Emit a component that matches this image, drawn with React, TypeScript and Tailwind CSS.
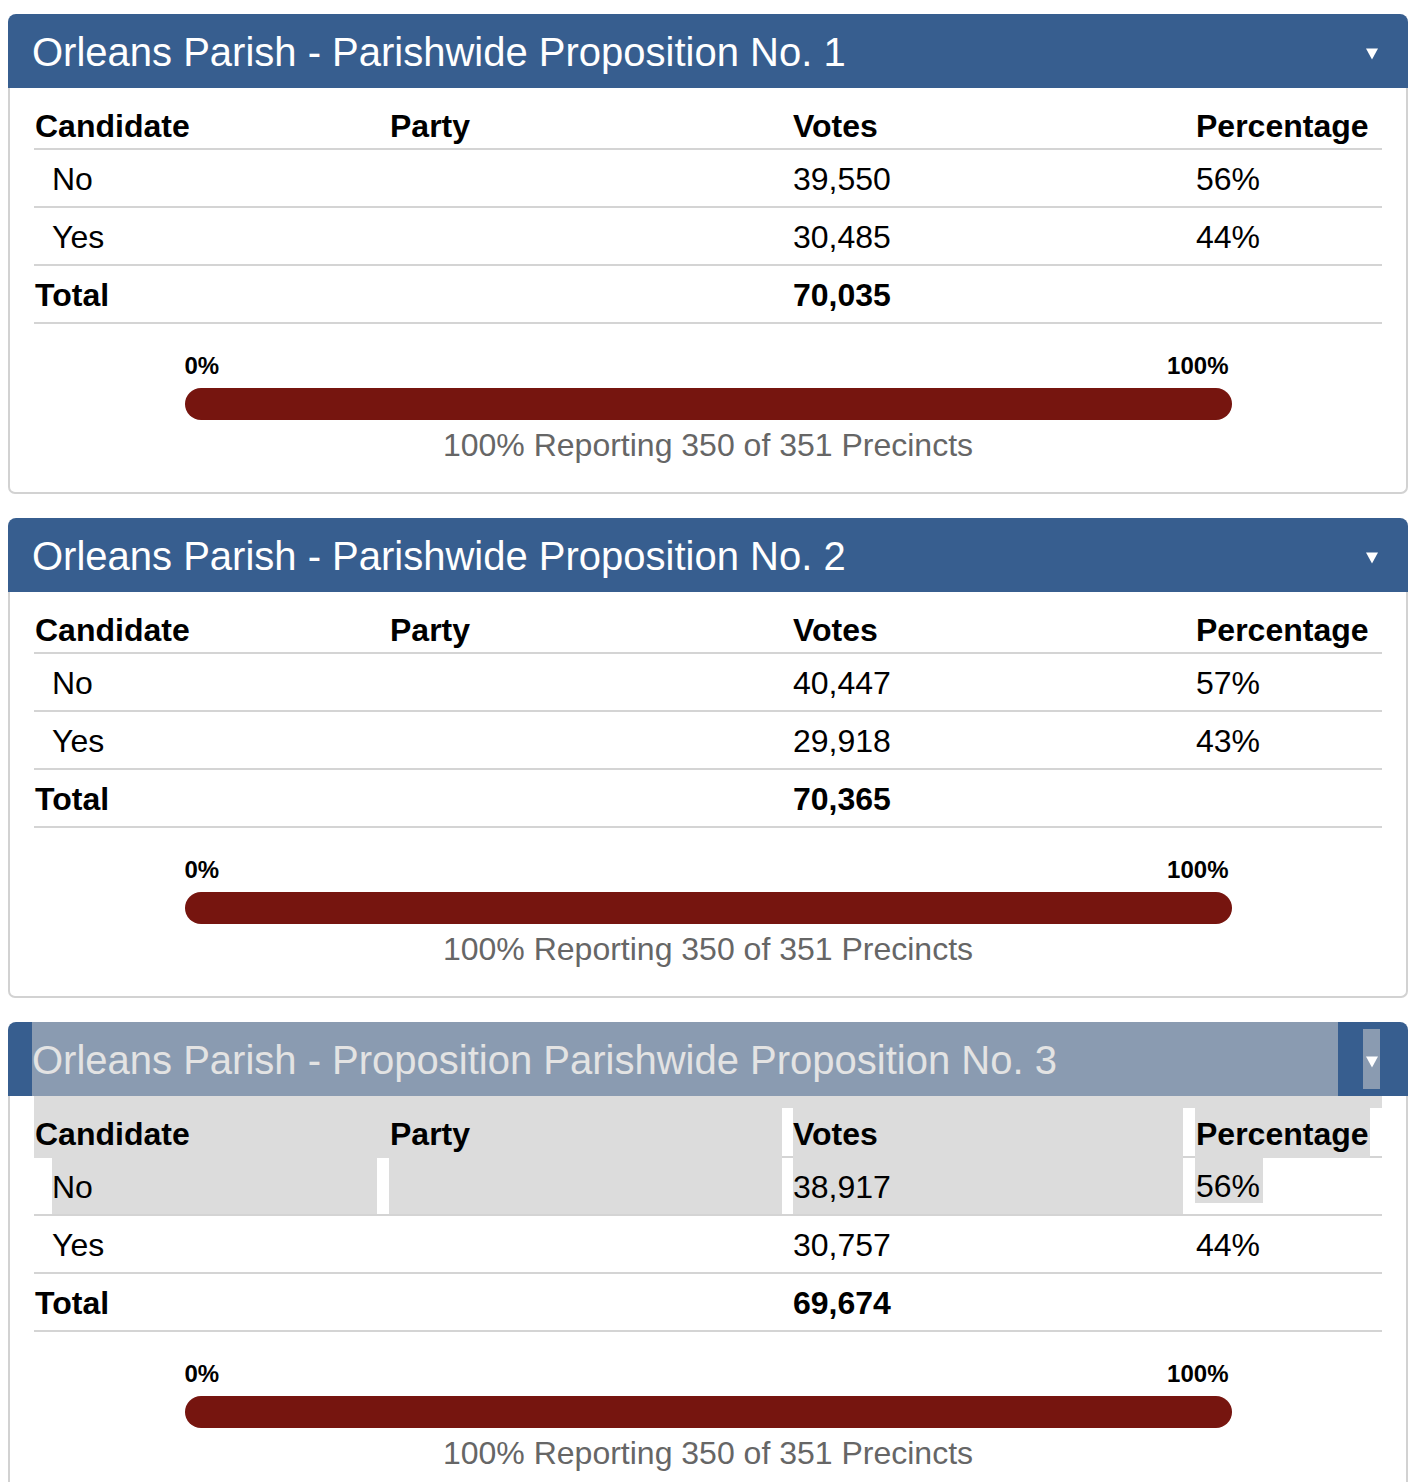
import React from "react";

type Row = { name: string; votes: string; pct: string };
type Panel = { title: string; rows: Row[]; total: string; selected: boolean };

const panels: Panel[] = [
  {
    title: "Orleans Parish - Parishwide Proposition No. 1",
    rows: [
      { name: "No", votes: "39,550", pct: "56%" },
      { name: "Yes", votes: "30,485", pct: "44%" },
    ],
    total: "70,035",
    selected: false,
  },
  {
    title: "Orleans Parish - Parishwide Proposition No. 2",
    rows: [
      { name: "No", votes: "40,447", pct: "57%" },
      { name: "Yes", votes: "29,918", pct: "43%" },
    ],
    total: "70,365",
    selected: false,
  },
  {
    title: "Orleans Parish - Proposition Parishwide Proposition No. 3",
    rows: [
      { name: "No", votes: "38,917", pct: "56%" },
      { name: "Yes", votes: "30,757", pct: "44%" },
    ],
    total: "69,674",
    selected: true,
  },
];

const Caret = () => (
  <svg width="12" height="12" viewBox="0 0 12 12" className="block">
    <polygon points="0,0.5 12,0.5 6,11.5" fill="#ffffff" />
  </svg>
);

function PanelView({ p }: { p: Panel }) {
  const sel = p.selected;
  return (
    <div className="w-[1400px] ml-[8px]">
      {/* header */}
      <div className="h-[74px] bg-[#375e8f] rounded-t-[8px] flex pl-[24px]">
        <div
          className={
            sel
              ? "w-[1306px] h-full flex items-center pt-[2px] bg-[#8a9bb1] text-[#e3e3e3] text-[40px] whitespace-nowrap"
              : "w-[1306px] h-full flex items-center pt-[2px] text-white text-[40px] whitespace-nowrap"
          }
        >
          {p.title}
        </div>
        <div className="flex-1 flex items-start pl-[25px] pt-[7px]">
          <div
            className={
              sel
                ? "w-[17px] h-[60px] bg-[#8a9bb1] flex items-center justify-center pt-[6px]"
                : "w-[17px] h-[60px] flex items-center justify-center pt-[6px]"
            }
          >
            <Caret />
          </div>
        </div>
      </div>
      {/* body */}
      <div className="border-x-2 border-b-2 border-[#d2d2d2] rounded-b-[7px] h-[406px] px-[24px]">
        <div className={sel ? "h-[12px] bg-[#dcdcdc]" : "h-[12px]"} />
        {/* header row */}
        <div className="grid grid-cols-[355px_404px_402px_187px] h-[50px] border-b-2 border-[#d4d4d4] font-bold text-[32px] text-black">
          <div className={sel ? "h-full flex items-center pt-[2px] pl-[1px] bg-[#dcdcdc]" : "h-full flex items-center pt-[2px] pl-[1px]"}>
            Candidate
          </div>
          <div className="h-full">
            <div className={sel ? "w-[393px] h-full flex items-center pt-[2px] pl-[1px] bg-[#dcdcdc]" : "w-[393px] h-full flex items-center pt-[2px] pl-[1px]"}>
              Party
            </div>
          </div>
          <div className="h-full">
            <div className={sel ? "w-[390px] h-full flex items-center pt-[2px] bg-[#dcdcdc]" : "w-[390px] h-full flex items-center pt-[2px]"}>
              Votes
            </div>
          </div>
          <div className="h-full">
            <div className={sel ? "w-[175px] h-full flex items-center pt-[2px] pl-[1px] bg-[#dcdcdc]" : "w-[175px] h-full flex items-center pt-[2px] pl-[1px]"}>
              Percentage
            </div>
          </div>
        </div>
        {/* data rows */}
        {p.rows.map((r, i) => {
          const hl = sel && i === 0;
          return (
            <div
              key={r.name}
              className="grid grid-cols-[355px_404px_402px_187px] h-[58px] border-b-2 border-[#d4d4d4] text-[32px] text-black"
            >
              <div className="h-full pl-[18px]">
                <div className={hl ? "w-[325px] h-full flex items-center pt-[2px] bg-[#dcdcdc]" : "w-[325px] h-full flex items-center pt-[2px]"}>
                  {r.name}
                </div>
              </div>
              <div className="h-full">
                <div className={hl ? "w-[393px] h-full bg-[#dcdcdc]" : "w-[393px] h-full"} />
              </div>
              <div className="h-full">
                <div className={hl ? "w-[390px] h-full flex items-center pt-[2px] bg-[#dcdcdc]" : "w-[390px] h-full flex items-center pt-[2px]"}>
                  {r.votes}
                </div>
              </div>
              <div className="h-full">
                {hl ? (
                  <div className="w-[68px] h-[45px] pt-[11px] pl-[1px] bg-[#dcdcdc] leading-[34px]">{r.pct}</div>
                ) : (
                  <div className="h-full flex items-center pt-[2px] pl-[1px]">{r.pct}</div>
                )}
              </div>
            </div>
          );
        })}
        {/* total row */}
        <div className="grid grid-cols-[355px_404px_402px_187px] h-[58px] border-b-2 border-[#d4d4d4] text-[32px] font-bold text-black">
          <div className="h-full flex items-center pt-[2px] pl-[1px]">Total</div>
          <div className="h-full" />
          <div className="h-full flex items-center pt-[2px]">{p.total}</div>
          <div className="h-full" />
        </div>
        {/* progress */}
        <div className="w-[1047px] mx-auto mt-[28px]">
          <div className="h-[27px] flex justify-between items-center text-[24px] font-bold text-black">
            <span>0%</span>
            <span className="pr-[3px]">100%</span>
          </div>
          <div className="mt-[9px] h-[32px] rounded-full bg-[#76150f]" />
        </div>
        <div className="mt-[7px] h-[36px] leading-[36px] text-center text-[32px] text-[#666666] whitespace-nowrap">
          100% Reporting 350 of 351 Precincts
        </div>
      </div>
    </div>
  );
}

export default function App() {
  return (
    <div
      className="w-[1422px] h-[1482px] overflow-hidden bg-white pt-[14px] flex flex-col gap-[24px]"
      style={{ fontFamily: '"Liberation Sans", Arial, Helvetica, sans-serif' }}
    >
      {panels.map((p) => (
        <PanelView key={p.title} p={p} />
      ))}
    </div>
  );
}
